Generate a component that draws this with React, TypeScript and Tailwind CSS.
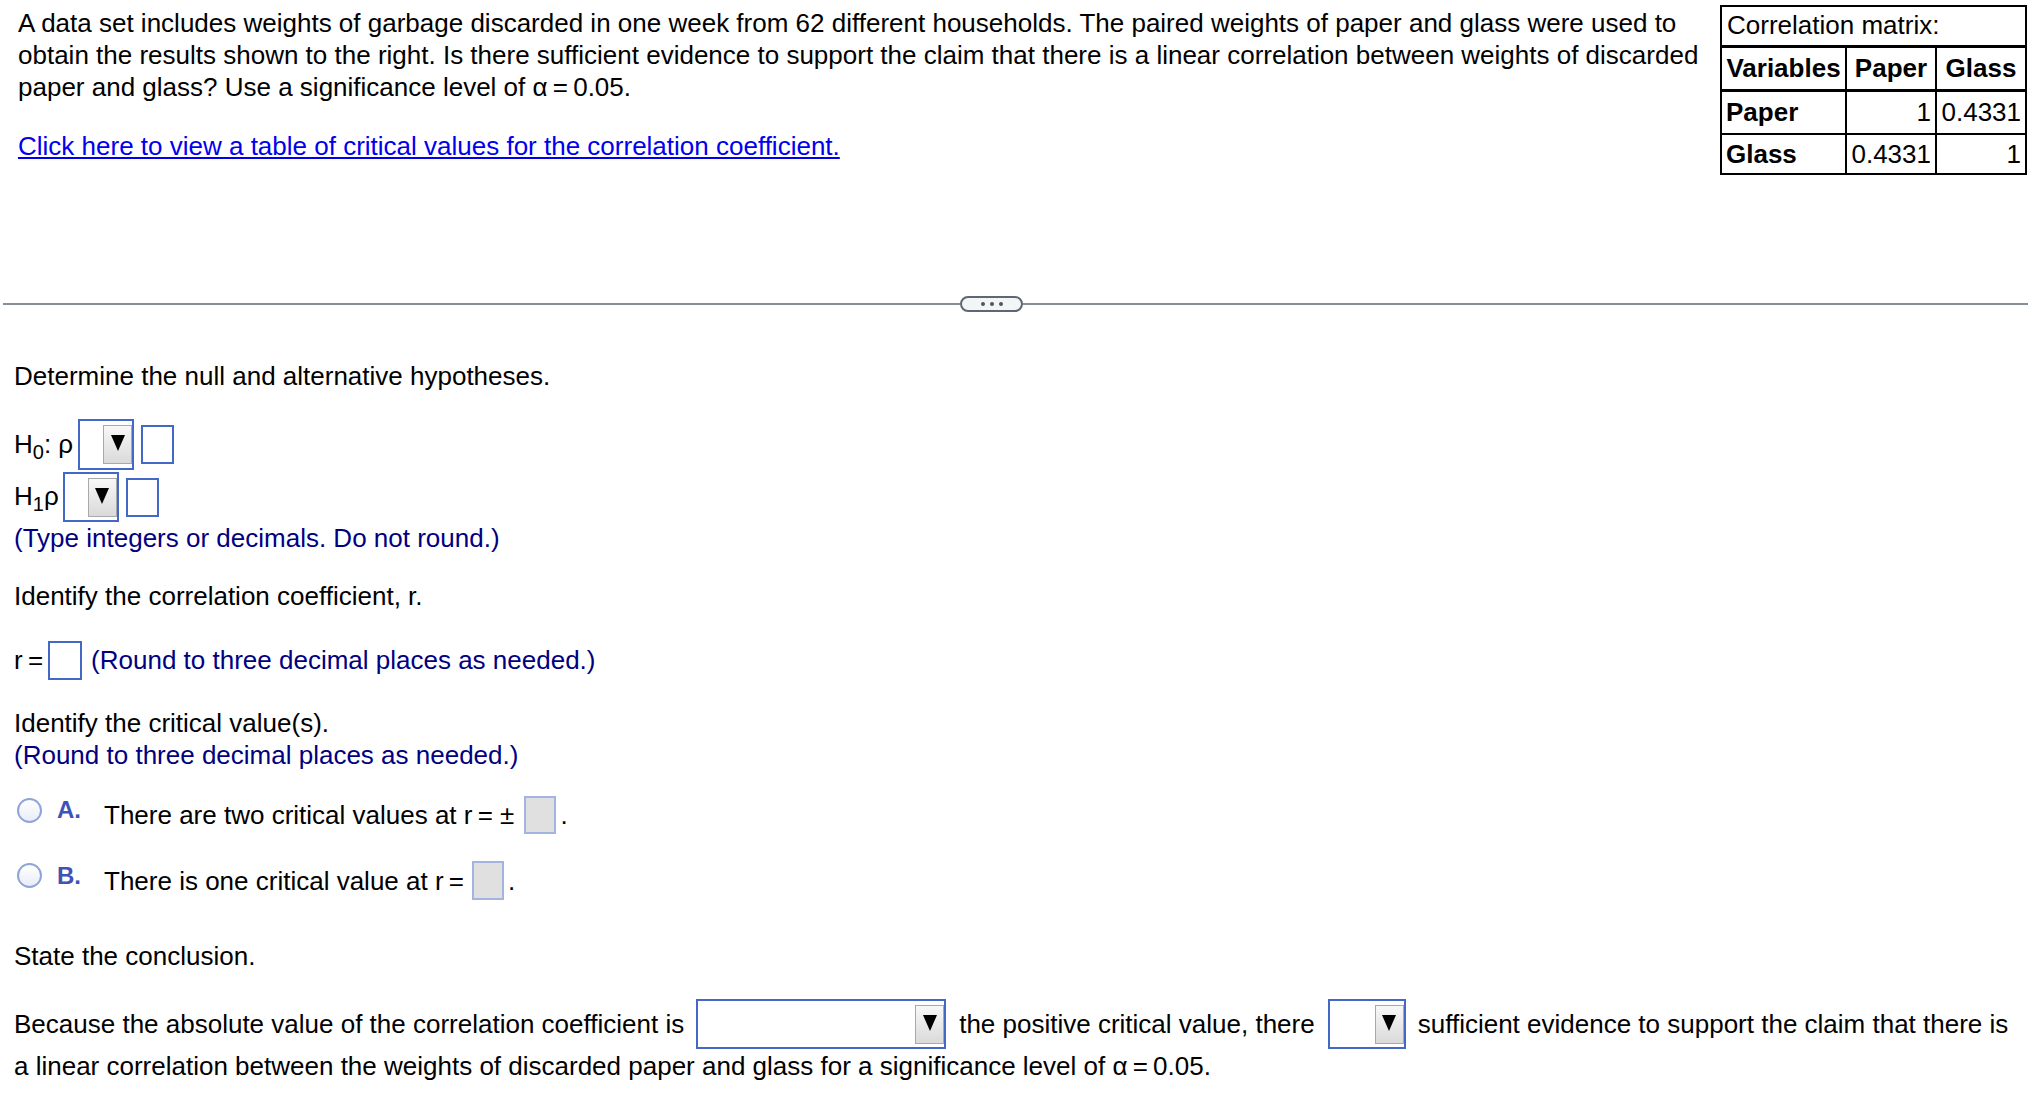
import React from "react";

function Arrow() {
  return (
    <svg width="16" height="18" viewBox="0 0 16 18" className="block">
      <polygon points="1,1 15,1 8,17" fill="#000" />
    </svg>
  );
}

function Dropdown({ className }: { className: string }) {
  return (
    <div className={`flex shrink-0 items-center justify-end border-2 border-[#4468c6] bg-white ${className}`}>
      <div className="flex h-[39px] w-[29px] items-start justify-center border border-[#a9a9a9] bg-linear-to-b from-[#f8f8f8] to-[#dadada] pt-[8px]">
        <Arrow />
      </div>
    </div>
  );
}

function Box({ className = "" }: { className?: string }) {
  return <div className={`h-[39px] w-[33px] shrink-0 border-2 border-[#4468c6] bg-white ${className}`} />;
}

function GrayBox({ className = "" }: { className?: string }) {
  return <div className={`h-[38px] w-[32px] shrink-0 border-2 border-[#a3b4e0] bg-[#e0e0e0] ${className}`} />;
}

function Radio() {
  return (
    <div className="relative -top-[5px] ml-[3px] h-[25px] w-[25px] shrink-0 rounded-full border-[2.5px] border-[#8fa4d9] bg-linear-to-b from-[#ffffff] to-[#e9edf7]" />
  );
}

export default function App() {
  return (
    <div
      className="min-h-[1102px] w-[2028px] bg-white text-[26px] leading-[32px] text-black"
      style={{ fontFamily: '"Liberation Sans", Arial, Helvetica, sans-serif' }}
    >
      {/* Top section */}
      <div className="flex pt-[5px]">
        <div className="w-[1720px] pl-[18px] pt-[2px]">
          <p className="whitespace-nowrap leading-[32px]">
            A data set includes weights of garbage discarded in one week from 62 different households. The paired weights of paper and glass were used to
            <br />
            obtain the results shown to the right. Is there sufficient evidence to support the claim that there is a linear correlation between weights of discarded
            <br />
            paper and glass? Use a significance level of α{"\u2009"}={"\u2009"}0.05.
          </p>
          <a href="#" className="mt-[27px] block w-fit text-[#0000ee] underline">
            Click here to view a table of critical values for the correlation coefficient.
          </a>
        </div>
        <table className="w-[305px] table-fixed border-collapse border-2 border-black">
          <colgroup>
            <col className="w-[125px]" />
            <col className="w-[90px]" />
            <col className="w-[90px]" />
          </colgroup>
          <tbody>
            <tr className="h-[40px] border-b-[3px] border-black">
              <td colSpan={3} className="px-[5px] pb-[2px] align-middle">
                Correlation matrix:
              </td>
            </tr>
            <tr className="h-[44px] border-b-[3px] border-black font-bold">
              <td className="border-r-2 border-black px-[3px] text-center">Variables</td>
              <td className="border-r-2 border-black px-[3px] text-center">Paper</td>
              <td className="px-[3px] text-center">Glass</td>
            </tr>
            <tr className="h-[44px] border-b-2 border-black">
              <td className="border-r-2 border-black px-[4px] font-bold">Paper</td>
              <td className="border-r-2 border-black px-[4px] text-right">1</td>
              <td className="px-[4px] text-right">0.4331</td>
            </tr>
            <tr className="h-[40px]">
              <td className="border-r-2 border-black px-[4px] font-bold">Glass</td>
              <td className="border-r-2 border-black px-[4px] text-right">0.4331</td>
              <td className="px-[4px] text-right">1</td>
            </tr>
          </tbody>
        </table>
      </div>

      {/* Separator */}
      <div className="mt-[121px] flex h-[16px] items-center">
        <div className="ml-[3px] h-[2px] w-[957px] bg-[#878e99]" />
        <div className="flex h-[16px] w-[63px] shrink-0 items-center justify-center gap-[5px] rounded-full border-2 border-[#5d6775] bg-[#f4f5f7]">
          <span className="h-[4px] w-[4px] rounded-full bg-[#4b5563]" />
          <span className="h-[4px] w-[4px] rounded-full bg-[#4b5563]" />
          <span className="h-[4px] w-[4px] rounded-full bg-[#4b5563]" />
        </div>
        <div className="h-[2px] flex-1 bg-[#878e99]" />
      </div>

      {/* Lower section */}
      <div className="pl-[14px]">
        <p className="mt-[48px]">Determine the null and alternative hypotheses.</p>

        <div className="mt-[27px] flex h-[51px] items-center">
          <span className="whitespace-nowrap">
            H<span className="relative top-[6px] text-[20px]">0</span>: ρ
          </span>
          <Dropdown className="ml-[5px] h-[51px] w-[56px]" />
          <Box className="ml-[7px]" />
        </div>
        <div className="mt-[2px] flex h-[50px] items-center">
          <span className="whitespace-nowrap">
            H<span className="relative top-[6px] text-[20px]">1</span>ρ
          </span>
          <Dropdown className="ml-[4px] h-[50px] w-[56px]" />
          <Box className="ml-[7px]" />
        </div>
        <p className="text-[#000080]">(Type integers or decimals. Do not round.)</p>

        <p className="mt-[26px]">Identify the correlation coefficient, r.</p>

        <div className="mt-[29px] flex h-[38px] items-center">
          <span className="whitespace-nowrap">r{"\u2009"}=</span>
          <Box className="ml-[5px] h-[38px] w-[34px]" />
          <span className="ml-[9px] text-[#000080]">(Round to three decimal places as needed.)</span>
        </div>

        <p className="mt-[28px]">Identify the critical value(s).</p>
        <p className="text-[#000080]">(Round to three decimal places as needed.)</p>

        <div className="mt-[25px] flex h-[38px] items-center">
          <Radio />
          <span className="relative -top-[5px] ml-[15px] w-[47px] text-[24px] font-bold text-[#3e52b8]">A.</span>
          <span className="whitespace-nowrap">There are two critical values at r{"\u2009"}= ±</span>
          <GrayBox className="ml-[10px]" />
          <span className="ml-[4px]">.</span>
        </div>

        <div className="mt-[27px] flex h-[39px] items-center">
          <Radio />
          <span className="relative -top-[5px] ml-[15px] w-[47px] text-[24px] font-bold text-[#3e52b8]">B.</span>
          <span className="whitespace-nowrap">There is one critical value at r{"\u2009"}=</span>
          <GrayBox className="ml-[8px] h-[39px]" />
          <span className="ml-[4px]">.</span>
        </div>

        <p className="mt-[40px]">State the conclusion.</p>

        <div className="mt-[27px] flex h-[50px] items-center whitespace-nowrap">
          <span>Because the absolute value of the correlation coefficient is</span>
          <Dropdown className="ml-[12px] h-[50px] w-[250px]" />
          <span className="ml-[13px]">the positive critical value, there</span>
          <Dropdown className="ml-[13px] h-[50px] w-[78px]" />
          <span className="ml-[12px]">sufficient evidence to support the claim that there is</span>
        </div>
        <p className="mt-[1px] whitespace-nowrap">
          a linear correlation between the weights of discarded paper and glass for a significance level of α{"\u2009"}={"\u2009"}0.05.
        </p>
      </div>
    </div>
  );
}
